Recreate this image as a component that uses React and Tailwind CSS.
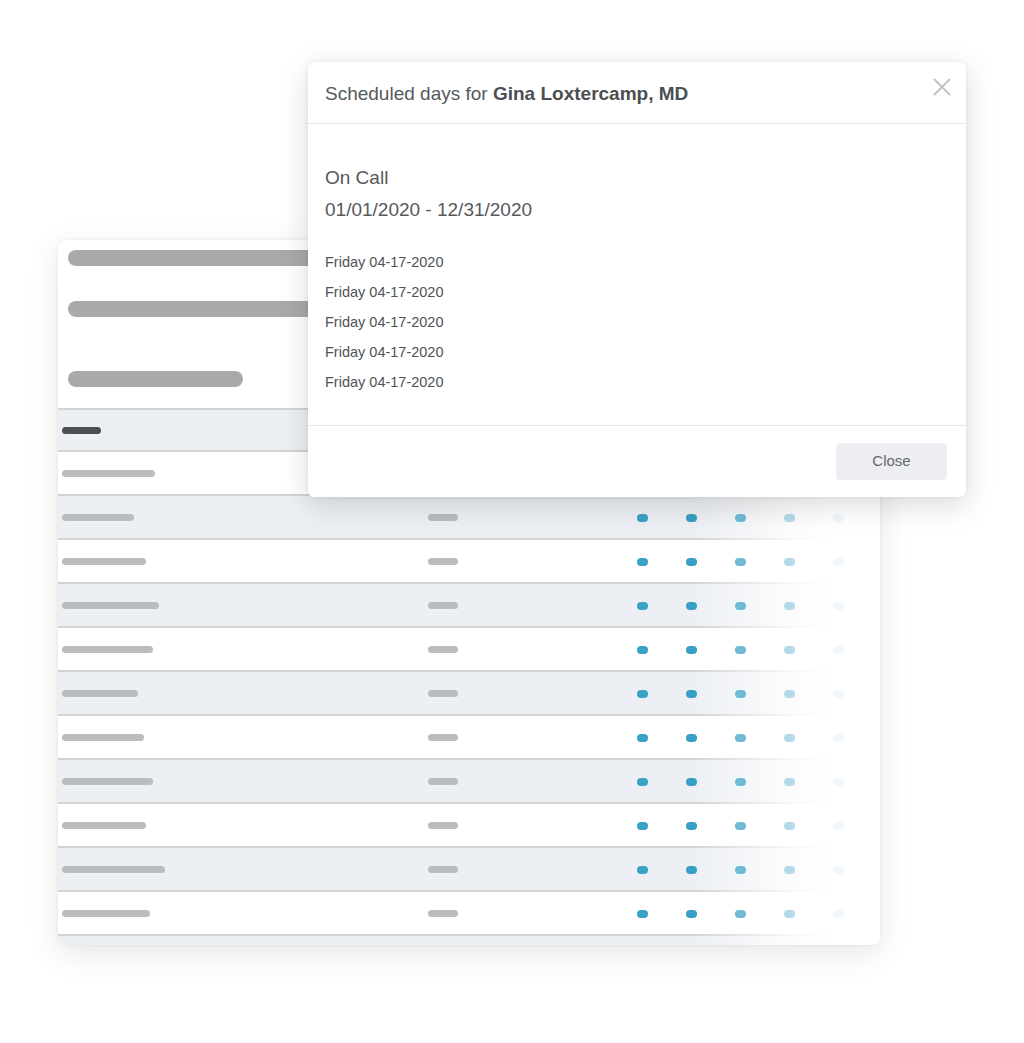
import React from "react";

const rowBars = [93, 72, 84, 97, 91, 76, 82, 91, 84, 103, 88];
const dotColors = ["bg-[#3aa2c5]", "bg-[#379fc3]", "bg-[#70bcd6]", "bg-[#b2dbe9]", "bg-[#f1f8fb]"];
const days = ["Friday 04-17-2020", "Friday 04-17-2020", "Friday 04-17-2020", "Friday 04-17-2020", "Friday 04-17-2020"];

const TableRow = ({ barWidth, shaded }) => (
  <div
    className={`flex items-center h-[44px] pt-[1px] border-b-2 border-[#d2d3d5] ${shaded ? "bg-[#eceff3]" : "bg-white"}`}
  >
    <div className="w-[370px] pl-[4px]">
      <div className="h-[7px] rounded-full bg-[#bbbcbe]" style={{ width: barWidth }} />
    </div>
    <div className="w-[30px] h-[7px] rounded-full bg-[#bbbcbe]" />
    <div className="ml-[179px] flex gap-[38px] relative z-20">
      {dotColors.map((c, i) => (
        <div key={i} className={`w-[11px] h-[8px] rounded-full ${c}`} />
      ))}
    </div>
  </div>
);

const BackgroundCard = () => (
  <div className="relative ml-[58px] mt-[240px] w-[822px] h-[705px] rounded-[8px] bg-white overflow-hidden shadow-[0_8px_32px_rgba(0,0,0,0.1),0_0_4px_rgba(0,0,0,0.06)]">
    <div className="px-[10px] pt-[10px] h-[168px]">
      <div className="h-[16px] w-[500px] rounded-full bg-[#a8a9ab]" />
      <div className="h-[16px] w-[500px] rounded-full bg-[#a8a9ab] mt-[35px]" />
      <div className="h-[16px] w-[175px] rounded-full bg-[#a8a9ab] mt-[54px]" />
    </div>
    <div className="flex items-center h-[44px] bg-[#eceff3] border-y-2 border-[#d2d3d5] pl-[4px]">
      <div className="w-[39px] h-[7px] rounded-full bg-[#4b4f53]" />
    </div>
    {rowBars.map((w, i) => (
      <TableRow key={i} barWidth={w} shaded={i % 2 === 1} />
    ))}
    <div className="h-[20px] bg-[#eceff3]" />
    <div className="absolute right-0 top-[168px] bottom-0 w-[190px] z-10 bg-[linear-gradient(to_right,rgba(255,255,255,0)_0%,rgba(255,255,255,0.85)_55%,#ffffff_74%)]" />
  </div>
);

const Modal = () => (
  <div className="absolute z-30 left-[308px] top-[62px] w-[658px] h-[435px] rounded-[6px] bg-white flex flex-col shadow-[0_8px_30px_rgba(0,0,0,0.15),0_0_4px_rgba(0,0,0,0.07)] text-[#56595c]">
    <div className="h-[62px] shrink-0 flex items-center justify-between pl-[17px] pr-[15px] border-b border-[#e6e7e9]">
      <div className="text-[19px] pt-[4px]">
        Scheduled days for <span className="font-bold text-[#4b4e51]">Gina Loxtercamp, MD</span>
      </div>
      <svg width="18" height="18" viewBox="0 0 18 18" className="mb-[12px]">
        <path d="M1.5 1.5 L16.5 16.5 M16.5 1.5 L1.5 16.5" stroke="#c3c4c6" strokeWidth="2" strokeLinecap="round" />
      </svg>
    </div>
    <div className="flex-1 pl-[17px] pt-[38px]">
      <div className="text-[19px] leading-[32px]">On Call</div>
      <div className="text-[19px] leading-[32px]">01/01/2020 - 12/31/2020</div>
      <div className="mt-[21px]">
        {days.map((d, i) => (
          <div key={i} className="text-[14.5px] leading-[30px] text-[#505356]">
            {d}
          </div>
        ))}
      </div>
    </div>
    <div className="h-[72px] shrink-0 border-t border-[#e6e7e9] flex justify-end items-start pt-[17px] pr-[19px]">
      <button className="w-[111px] h-[37px] rounded-[4px] bg-[#eceef2] text-[15px] text-[#65686b]">
        Close
      </button>
    </div>
  </div>
);

export default function App() {
  return (
    <div className="relative w-[1024px] h-[1043px] bg-white overflow-hidden font-['Liberation_Sans',Arial,sans-serif]">
      <BackgroundCard />
      <Modal />
    </div>
  );
}
